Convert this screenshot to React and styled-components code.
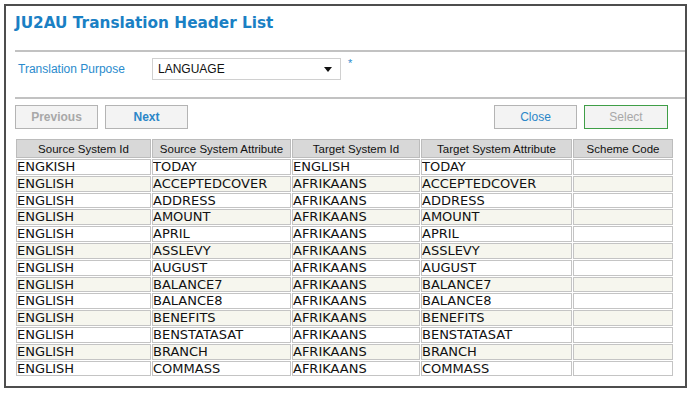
import React from "react";
import styled, { createGlobalStyle } from "styled-components";

const Global = createGlobalStyle`
  html, body { margin: 0; padding: 0; background: #fff; }
  body { width: 692px; height: 394px; overflow: hidden; }
`;

const Frame = styled.div`
  margin: 4px 5px 0 4px;
  height: 380px;
  border: 2px solid #4e4e4e;
  padding-left: 9px;
  display: flex;
  flex-direction: column;
  box-sizing: content-box;
`;

const Title = styled.h1`
  margin: 0;
  padding-top: 8px;
  height: 36px;
  font-family: "DejaVu Sans", Verdana, sans-serif;
  font-weight: bold;
  font-size: 15.3px;
  line-height: 18px;
  color: #1a80c4;
`;

const Divider = styled.div`
  height: 0;
  border-top: 2px solid #c2c2c2;
`;

const FormRow = styled.div`
  height: 45px;
  display: flex;
  align-items: flex-start;
  padding-top: 6px;
  box-sizing: border-box;
`;

const Label = styled.label`
  width: 137px;
  height: 22px;
  line-height: 22px;
  padding-left: 3px;
  box-sizing: border-box;
  font-family: "Liberation Sans", Arial, sans-serif;
  font-size: 12px;
  color: #2a8bcd;
`;

const SelectBox = styled.div`
  width: 189px;
  height: 22px;
  box-sizing: border-box;
  border: 1px solid #d0d0d0;
  display: flex;
  align-items: center;
  justify-content: space-between;
  padding: 0 8px 0 5px;
  font-family: "Liberation Sans", Arial, sans-serif;
  font-size: 12px;
  color: #111;
`;

const Arrow = styled.span`
  width: 0;
  height: 0;
  border-left: 4px solid transparent;
  border-right: 4px solid transparent;
  border-top: 5px solid #111;
`;

const Required = styled.span`
  margin-top: -1px;
  margin-left: 7px;
  font-family: "Liberation Sans", Arial, sans-serif;
  font-size: 11px;
  color: #2a8bcd;
`;

const ButtonRow = styled.div`
  display: flex;
  align-items: center;
  gap: 7px;
  margin-top: 6px;
  padding-right: 17px;
`;

const Spacer = styled.div`
  flex: 1;
`;

const Button = styled.button`
  width: ${(p) => p.$w || 83}px;
  height: 24px;
  margin: 0;
  padding: 0;
  background: #f3f3f3;
  border: 1px solid ${(p) => (p.$green ? "#3f9e47" : "#b4b4b4")};
  font-family: "Liberation Sans", Arial, sans-serif;
  font-size: 12px;
  font-weight: ${(p) => (p.$bold ? "bold" : "normal")};
  color: ${(p) => (p.$disabled ? "#a8a8a8" : "#2a86c8")};
`;

const Table = styled.table`
  margin-top: 9px;
  border-collapse: separate;
  border-spacing: 1px;
  table-layout: fixed;
  width: 659px;
`;

const Th = styled.th`
  background: #d8d8d8;
  border: 1px solid #bcbcbc;
  height: 17px;
  padding: 0;
  font-family: "Liberation Sans", Arial, sans-serif;
  font-size: 11.5px;
  font-weight: normal;
  color: #111;
  text-align: center;
`;

const Tr = styled.tr`
  background: ${(p) => (p.$alt ? "#f6f6ee" : "#fff")};
`;

const Td = styled.td`
  border: 1px solid #c4c4c4;
  height: 13.8px;
  line-height: 13.8px;
  padding: 0;
  font-family: "DejaVu Sans", Verdana, sans-serif;
  font-size: 13px;
  color: #111;
  white-space: nowrap;
  overflow: hidden;
`;

const rows = [
  ["ENGKISH", "TODAY", "ENGLISH", "TODAY"],
  ["ENGLISH", "ACCEPTEDCOVER", "AFRIKAANS", "ACCEPTEDCOVER"],
  ["ENGLISH", "ADDRESS", "AFRIKAANS", "ADDRESS"],
  ["ENGLISH", "AMOUNT", "AFRIKAANS", "AMOUNT"],
  ["ENGLISH", "APRIL", "AFRIKAANS", "APRIL"],
  ["ENGLISH", "ASSLEVY", "AFRIKAANS", "ASSLEVY"],
  ["ENGLISH", "AUGUST", "AFRIKAANS", "AUGUST"],
  ["ENGLISH", "BALANCE7", "AFRIKAANS", "BALANCE7"],
  ["ENGLISH", "BALANCE8", "AFRIKAANS", "BALANCE8"],
  ["ENGLISH", "BENEFITS", "AFRIKAANS", "BENEFITS"],
  ["ENGLISH", "BENSTATASAT", "AFRIKAANS", "BENSTATASAT"],
  ["ENGLISH", "BRANCH", "AFRIKAANS", "BRANCH"],
  ["ENGLISH", "COMMASS", "AFRIKAANS", "COMMASS"],
];

const cols = [135, 139, 128, 151, 100];
const headers = [
  "Source System Id",
  "Source System Attribute",
  "Target System Id",
  "Target System Attribute",
  "Scheme Code",
];

export default function App() {
  return (
    <>
      <Global />
      <Frame>
        <Title>JU2AU Translation Header List</Title>
        <Divider />
        <FormRow>
          <Label>Translation Purpose</Label>
          <SelectBox>
            <span>LANGUAGE</span>
            <Arrow />
          </SelectBox>
          <Required>*</Required>
        </FormRow>
        <Divider />
        <ButtonRow>
          <Button $bold $disabled $w={83}>Previous</Button>
          <Button $bold $w={83}>Next</Button>
          <Spacer />
          <Button $w={83}>Close</Button>
          <Button $disabled $green $w={84}>Select</Button>
        </ButtonRow>
        <Table>
          <colgroup>
            {cols.map((w, i) => (
              <col key={i} style={{ width: w }} />
            ))}
          </colgroup>
          <thead>
            <tr>
              {headers.map((h) => (
                <Th key={h}>{h}</Th>
              ))}
            </tr>
          </thead>
          <tbody>
            {rows.map((r, i) => (
              <Tr key={i} $alt={i % 2 === 1}>
                {r.map((c, j) => (
                  <Td key={j}>{c}</Td>
                ))}
                <Td />
              </Tr>
            ))}
          </tbody>
        </Table>
      </Frame>
    </>
  );
}
